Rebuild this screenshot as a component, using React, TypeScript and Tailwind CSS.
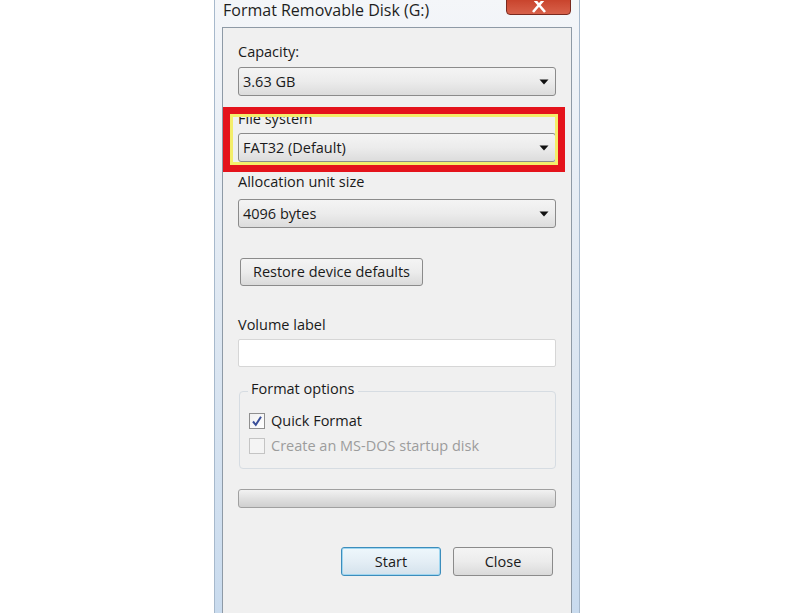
import React from "react";

const font = { fontFamily: '"Open Sans", "Noto Sans", sans-serif' };

function Arrow() {
  return (
    <svg width="10" height="6" viewBox="0 0 10 6" className="shrink-0">
      <path d="M0.5 0.5 H9.5 L5 5.5 Z" fill="#111" />
    </svg>
  );
}

function Combo({ value }: { value: string }) {
  return (
    <div className="flex h-[29px] w-[318px] items-center justify-between rounded-[3px] border border-[#8b8b8b] bg-gradient-to-b from-[#f4f4f4] via-[#ececec] to-[#dcdcdc] pl-[4px] pr-[6px] text-[14.5px] text-[#1a1a1a]">
      <span>{value}</span>
      <Arrow />
    </div>
  );
}

export default function App() {
  return (
    <div className="relative h-[613px] w-[800px] overflow-hidden bg-white" style={font}>
      <div className="ml-[214px] flex h-[613px] w-[366px] flex-col border-x border-[#a7b9cc] bg-gradient-to-b from-[#f4f6f9] via-[#dfe8f2] to-[#c9dbee]">
        {/* title bar */}
        <div className="flex h-[27px] items-start pt-[1px]">
          <span className="ml-[8px] text-[16px] leading-[18px] text-[#1e1e1e]">
            Format Removable Disk (G:)
          </span>
          <div className="ml-auto mr-[8px] mt-[-15px] flex h-[29px] w-[65px] items-end justify-center rounded-[4px] border border-[#7a2a1f] bg-gradient-to-b from-[#e08a78] via-[#c9452e] to-[#d8614a] pb-[1px]">
            <svg width="18" height="12" viewBox="0 0 18 12">
              <path d="M2 -4 L9 4 L16 -4 M9 4 L3 11 M9 4 L15 11" stroke="#ffffff" strokeWidth="2.6" fill="none" />
            </svg>
          </div>
        </div>
        {/* client panel */}
        <div className="mx-[7px] flex flex-1 flex-col border border-b-0 border-[#8e9aa6] bg-[#f0f0f0] pl-[15px] text-[14.5px] text-[#1a1a1a]">
          <div className="mt-[15px] h-[18px] leading-[18px]">Capacity:</div>
          <div className="mt-[6px]">
            <Combo value="3.63 GB" />
          </div>
          <div className="mt-[14px] h-[18px] leading-[18px]">File system</div>
          <div className="mt-[5px]">
            <Combo value="FAT32 (Default)" />
          </div>
          <div className="mt-[11px] h-[18px] leading-[18px]">Allocation unit size</div>
          <div className="mt-[8px]">
            <Combo value="4096 bytes" />
          </div>
          <div className="ml-[2px] mt-[30px] flex h-[28px] w-[183px] items-center justify-center rounded-[3px] border border-[#8b8b8b] bg-gradient-to-b from-[#f4f4f4] via-[#ececec] to-[#dadada]">
            Restore device defaults
          </div>
          <div className="mt-[30px] h-[18px] leading-[18px]">Volume label</div>
          <div className="mt-[5px] h-[28px] w-[318px] rounded-[2px] border border-[#d6d6d6] bg-white" />
          {/* group box */}
          <div className="relative ml-[1px] mt-[24px] h-[78px] w-[317px] rounded-[4px] border border-[#d6dce2]">
            <div className="absolute left-[8px] top-[-12px] bg-[#f0f0f0] px-[3px] leading-[18px]">
              Format options
            </div>
            <div className="ml-[9px] mt-[20px] flex h-[17px] items-center gap-[6px]">
              <div className="flex h-[16px] w-[16px] items-center justify-center border border-[#8f8f8f] bg-gradient-to-br from-[#f0f0f0] to-[#ffffff]">
                <svg width="12" height="12" viewBox="0 0 12 12">
                  <path d="M2 6.5 L4.8 9.8 L10 1.8" stroke="#3a4f9a" strokeWidth="2" fill="none" />
                </svg>
              </div>
              <span className="leading-[17px]">Quick Format</span>
            </div>
            <div className="ml-[9px] mt-[8px] flex h-[17px] items-center gap-[6px]">
              <div className="h-[16px] w-[16px] border border-[#c4c4c4] bg-[#f4f4f4]" />
              <span className="leading-[17px] text-[#9c9c9c]">Create an MS-DOS startup disk</span>
            </div>
          </div>
          <div className="mt-[20px] h-[19px] w-[318px] rounded-[3px] border border-[#a0a0a0] bg-gradient-to-b from-[#f2f2f2] via-[#e0e0e0] to-[#cfcfcf]" />
          <div className="mt-[39px] flex w-[315px] justify-end gap-[12px]">
            <div className="flex h-[29px] w-[100px] items-center justify-center rounded-[3px] border border-[#3c8dbc] bg-gradient-to-b from-[#eef7fc] via-[#e4eef5] to-[#d4e2ec] shadow-[inset_0_0_0_1px_#9fd6f0]">
              Start
            </div>
            <div className="flex h-[29px] w-[100px] items-center justify-center rounded-[3px] border border-[#8b8b8b] bg-gradient-to-b from-[#f4f4f4] via-[#ececec] to-[#dadada]">
              Close
            </div>
          </div>
        </div>
      </div>
      {/* red highlight overlay */}
      <div className="absolute left-[223px] top-[107px] h-[65px] w-[342px] border-[7px] border-[#e4131b]">
        <div className="h-full w-full border-[3px] border-[#f4ee6a]" />
      </div>
    </div>
  );
}
